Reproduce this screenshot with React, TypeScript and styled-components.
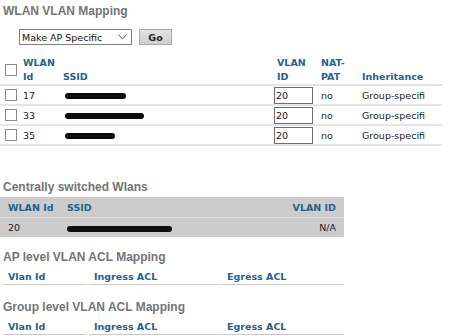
import React from 'react';
import styled, { createGlobalStyle } from 'styled-components';

const GlobalStyle = createGlobalStyle`
  html, body {
    margin: 0;
    padding: 0;
    background: #fff;
  }
  body {
    font-family: 'DejaVu Sans', Verdana, sans-serif;
    font-size: 9.5px;
    color: #222;
  }
`;

const Page = styled.div`
  width: 474px;
  height: 336px;
  overflow: hidden;
  padding: 3px 0 0 0;
  box-sizing: border-box;
`;

const Title = styled.h2<{ $top?: number }>`
  margin: ${p => p.$top ?? 0}px 0 0 3px;
  font-family: 'Liberation Sans', Arial, sans-serif;
  font-size: 12px;
  font-weight: bold;
  color: #747474;
  line-height: 16px;
`;

const Controls = styled.div`
  display: flex;
  align-items: center;
  gap: 7px;
  margin: 10px 0 0 19px;
`;

const SelectWrap = styled.div`
  position: relative;
  width: 113px;
  height: 16px;
`;

const Select = styled.select`
  appearance: none;
  width: 100%;
  height: 100%;
  border: 1px solid #7f7f7f;
  background: #fff;
  font-family: 'DejaVu Sans', Verdana, sans-serif;
  font-size: 9.5px;
  color: #111;
  padding: 0 0 0 2px;
  box-sizing: border-box;
  border-radius: 0;
`;

const Chevron = styled.svg`
  position: absolute;
  right: 5px;
  top: 5px;
  pointer-events: none;
`;

const GoButton = styled.button`
  width: 33px;
  height: 16px;
  padding: 0;
  border: 1px solid #a8a8a8;
  background: linear-gradient(#e2e2e2, #cfcfcf);
  font-family: 'DejaVu Sans', Verdana, sans-serif;
  font-size: 9.5px;
  font-weight: bold;
  color: #222;
`;

const Table = styled.table`
  width: 442px;
  margin-top: 11px;
  border-collapse: separate;
  border-spacing: 0;
  table-layout: fixed;
`;

const HeadCell = styled.th<{ $w?: number; $pad?: number; $mid?: boolean }>`
  box-sizing: border-box;
  width: ${p => (p.$w ? `${p.$w}px` : 'auto')};
  text-align: left;
  vertical-align: ${p => (p.$mid ? 'middle' : 'bottom')};
  font-weight: bold;
  color: #23628f;
  font-size: 9.5px;
  line-height: 14px;
  padding: 0 0 0 ${p => p.$pad ?? 1}px;
  border-bottom: 2px solid #e3e3e3;
`;

const Cell = styled.td<{ $pad?: number }>`
  box-sizing: border-box;
  height: 20px;
  padding: 0 0 0 ${p => p.$pad ?? 1}px;
  border-bottom: 2px solid #e6e6e6;
  white-space: nowrap;
  overflow: hidden;
  vertical-align: middle;
`;

const Check = styled.input.attrs({ type: 'checkbox' })`
  appearance: none;
  width: 12px;
  height: 12px;
  margin: 0 0 0 5px;
  border: 1px solid #8a8a8a;
  background: #fff;
  display: block;
`;

const Redacted = styled.span<{ $w: number }>`
  display: inline-block;
  width: ${p => p.$w}px;
  height: 6px;
  border-radius: 3px;
  background: #0c0c0c;
  vertical-align: middle;
`;

const VlanInput = styled.input`
  width: 39px;
  height: 17px;
  box-sizing: border-box;
  border: 1px solid #6d6d6d;
  padding: 0 0 0 1px;
  font-family: 'DejaVu Sans', Verdana, sans-serif;
  font-size: 9.5px;
  color: #111;
  display: block;
`;

const GrayTable = styled.table`
  width: 344px;
  margin-top: 2px;
  border-collapse: separate;
  border-spacing: 0;
  table-layout: fixed;
  background: #cccccc;
`;

const GrayHead = styled.th<{ $right?: boolean; $w?: number }>`
  box-sizing: border-box;
  width: ${p => (p.$w ? `${p.$w}px` : 'auto')};
  height: 20px;
  padding: 0 8px;
  text-align: ${p => (p.$right ? 'right' : 'left')};
  white-space: nowrap;
  color: #23628f;
  font-weight: bold;
  font-size: 9.5px;
`;

const GrayCell = styled.td<{ $right?: boolean }>`
  box-sizing: border-box;
  height: 20px;
  padding: 0 8px;
  text-align: ${p => (p.$right ? 'right' : 'left')};
  white-space: nowrap;
  border-top: 1px solid #dedede;
`;

const AclTable = styled.table`
  width: 345px;
  margin: 1px 0 0 1px;
  border-collapse: separate;
  border-spacing: 2px 0;
  table-layout: fixed;
`;

const AclHead = styled.th<{ $w?: number }>`
  box-sizing: border-box;
  width: ${p => (p.$w ? `${p.$w}px` : 'auto')};
  height: 19px;
  text-align: left;
  vertical-align: bottom;
  color: #23628f;
  font-weight: bold;
  font-size: 9.5px;
  line-height: 12px;
  padding: 0 0 1px 5px;
  border-bottom: 1px solid #c8c8c8;
`;

const rows = [
  { id: 17, ssid: 61 },
  { id: 33, ssid: 79 },
  { id: 35, ssid: 50 },
];

export default function App() {
  return (
    <Page>
      <GlobalStyle />
      <Title>WLAN VLAN Mapping</Title>
      <Controls>
        <SelectWrap>
          <Select defaultValue="ap">
            <option value="ap">Make AP Specific</option>
          </Select>
          <Chevron width="9" height="6" viewBox="0 0 9 6">
            <path d="M0.5 0.5 L4.5 5 L8.5 0.5" fill="none" stroke="#555" strokeWidth="1" />
          </Chevron>
        </SelectWrap>
        <GoButton>Go</GoButton>
      </Controls>

      <Table>
        <thead>
          <tr>
            <HeadCell $w={22} $pad={0} $mid><Check /></HeadCell>
            <HeadCell $w={40}>WLAN<br />Id</HeadCell>
            <HeadCell $w={212}>SSID</HeadCell>
            <HeadCell $w={46} $pad={3}>VLAN<br />ID</HeadCell>
            <HeadCell $w={41}>NAT-<br />PAT</HeadCell>
            <HeadCell>Inheritance</HeadCell>
          </tr>
        </thead>
        <tbody>
          {rows.map(r => (
            <tr key={r.id}>
              <Cell $pad={0}><Check /></Cell>
              <Cell>{r.id}</Cell>
              <Cell $pad={3}><Redacted $w={r.ssid} /></Cell>
              <Cell $pad={0}><VlanInput defaultValue="20" /></Cell>
              <Cell>no</Cell>
              <Cell>Group-specifi</Cell>
            </tr>
          ))}
        </tbody>
      </Table>

      <Title $top={33}>Centrally switched Wlans</Title>
      <GrayTable>
        <thead>
          <tr>
            <GrayHead $w={59}>WLAN Id</GrayHead>
            <GrayHead>SSID</GrayHead>
            <GrayHead $w={90} $right>VLAN ID</GrayHead>
          </tr>
        </thead>
        <tbody>
          <tr>
            <GrayCell>20</GrayCell>
            <GrayCell><Redacted $w={105} /></GrayCell>
            <GrayCell $right>N/A</GrayCell>
          </tr>
        </tbody>
      </GrayTable>

      <Title $top={12}>AP level VLAN ACL Mapping</Title>
      <AclTable>
        <thead>
          <tr>
            <AclHead $w={84}>Vlan Id</AclHead>
            <AclHead $w={131}>Ingress ACL</AclHead>
            <AclHead>Egress ACL</AclHead>
          </tr>
        </thead>
      </AclTable>

      <Title $top={14}>Group level VLAN ACL Mapping</Title>
      <AclTable>
        <thead>
          <tr>
            <AclHead $w={84}>Vlan Id</AclHead>
            <AclHead $w={131}>Ingress ACL</AclHead>
            <AclHead>Egress ACL</AclHead>
          </tr>
        </thead>
      </AclTable>
    </Page>
  );
}
